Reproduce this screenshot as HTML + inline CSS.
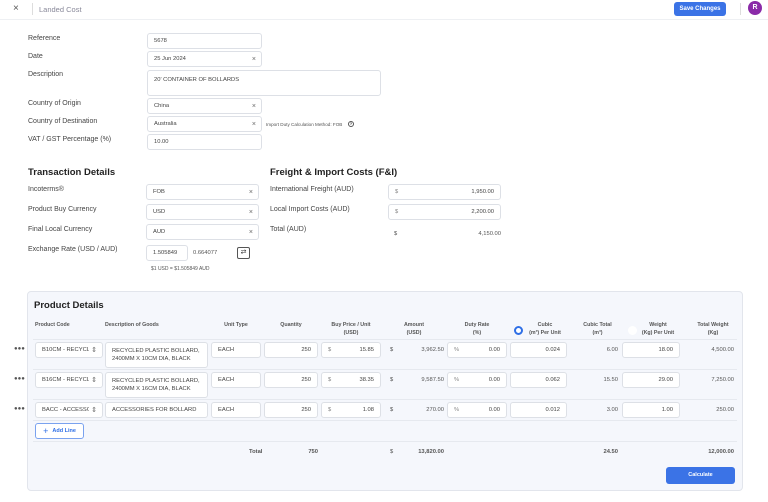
<!DOCTYPE html>
<html><head><meta charset="utf-8"><style>
*{box-sizing:border-box;margin:0;padding:0}
body{width:768px;height:502px;background:#fff;font-family:"Liberation Sans",sans-serif;color:#333;position:relative;overflow:hidden}
.a{position:absolute}
.lbl{position:absolute;left:28px;font-size:7px;color:#444}
.in{position:absolute;background:#fff;border:1px solid #dde0e6;border-radius:3px;font-size:5.8px;color:#444;padding-left:6px;display:flex;align-items:center;white-space:nowrap;overflow:hidden}
.in .x{position:absolute;right:5px;font-size:7px;color:#666;background:#fff;padding-left:2px}
.r{justify-content:flex-end;padding-right:6px}
.pre{position:absolute;left:6px;color:#888}
.h{position:absolute;font-size:5.3px;font-weight:bold;color:#555;text-align:center;line-height:8px}
.t{position:absolute;font-size:5.8px;color:#555}
.dots{position:absolute;left:14px;font-size:6px;color:#555;letter-spacing:0px}
.line{position:absolute;left:33px;width:704px;height:1px;background:#e6e9ef}
</style></head><body>
<div class="a" style="left:0;top:19px;width:768px;height:1px;background:#eef0f3"></div>
<div class="a" style="left:13px;top:3px;font-size:10px;color:#555">×</div>
<div class="a" style="left:32px;top:3px;width:1px;height:12px;background:#ddd"></div>
<div class="a" style="left:39px;top:5px;font-size:7.5px;color:#889">Landed Cost</div>
<div class="a" style="left:674px;top:2px;width:52px;height:14px;background:#3b73e6;border-radius:3px;color:#fff;font-size:6px;font-weight:bold;line-height:14px;text-align:center">Save Changes</div>
<div class="a" style="left:740px;top:3px;width:1px;height:12px;background:#ddd"></div>
<div class="a" style="left:748px;top:1px;width:14px;height:14px;border-radius:50%;background:#8a2aa8;color:#fff;font-size:7px;font-weight:bold;line-height:14px;text-align:center">R</div>

<div class="lbl" style="top:35px">Reference</div>
<div class="in" style="left:147px;top:33px;width:115px;height:16px">5678</div>
<div class="lbl" style="top:53px">Date</div>
<div class="in" style="left:147px;top:51px;width:115px;height:16px">25 Jun 2024<span class="x">×</span></div>
<div class="lbl" style="top:71px">Description</div>
<div class="in" style="left:147px;top:70px;width:234px;height:26px;align-items:flex-start;padding-top:6px">20' CONTAINER OF BOLLARDS</div>
<div class="lbl" style="top:100px">Country of Origin</div>
<div class="in" style="left:147px;top:98px;width:115px;height:16px">China<span class="x">×</span></div>
<div class="lbl" style="top:118px">Country of Destination</div>
<div class="in" style="left:147px;top:116px;width:115px;height:16px">Australia<span class="x">×</span></div>
<div class="a" style="left:266px;top:122px;font-size:4.6px;color:#555">Import Duty Calculation Method: FOB</div>
<div class="a" style="left:348px;top:121px;width:6px;height:6px;border-radius:50%;border:1.2px solid #555;font-size:4px;text-align:center;line-height:4px;font-weight:bold">?</div>
<div class="lbl" style="top:136px">VAT / GST Percentage (%)</div>
<div class="in" style="left:147px;top:134px;width:115px;height:16px">10.00</div>

<div class="a" style="left:28px;top:167px;font-size:9.5px;font-weight:bold;color:#222">Transaction Details</div>
<div class="a" style="left:270px;top:167px;font-size:9.5px;font-weight:bold;color:#222">Freight &amp; Import Costs (F&amp;I)</div>
<div class="lbl" style="top:186px">Incoterms®</div>
<div class="in" style="left:146px;top:184px;width:113px;height:16px">FOB<span class="x">×</span></div>
<div class="lbl" style="top:206px">Product Buy Currency</div>
<div class="in" style="left:146px;top:204px;width:113px;height:16px">USD<span class="x">×</span></div>
<div class="lbl" style="top:226px">Final Local Currency</div>
<div class="in" style="left:146px;top:224px;width:113px;height:16px">AUD<span class="x">×</span></div>
<div class="lbl" style="top:246px">Exchange Rate (USD / AUD)</div>
<div class="in" style="left:146px;top:245px;width:42px;height:16px">1.505849</div>
<div class="t" style="left:193px;top:250px">0.664077</div>
<div class="a" style="left:237px;top:247px;width:13px;height:12px;border:1px solid #555;border-radius:2px;font-size:7px;text-align:center;line-height:10px">⇄</div>
<div class="t" style="left:151px;top:266px;font-size:5px">$1 USD = $1.505849 AUD</div>

<div class="a" style="left:270px;top:186px;font-size:7px;color:#444">International Freight (AUD)</div>
<div class="in r" style="left:388px;top:184px;width:113px;height:16px"><span class="pre">$</span>1,950.00</div>
<div class="a" style="left:270px;top:206px;font-size:7px;color:#444">Local Import Costs (AUD)</div>
<div class="in r" style="left:388px;top:204px;width:113px;height:16px"><span class="pre">$</span>2,200.00</div>
<div class="a" style="left:270px;top:226px;font-size:7px;color:#444">Total (AUD)</div>
<div class="t" style="left:394px;top:231px">$</div>
<div class="t" style="left:440px;top:231px;width:61px;text-align:right">4,150.00</div>

<div class="a" style="left:27px;top:291px;width:716px;height:200px;background:#f5f7fc;border:1px solid #e2e5ec;border-radius:4px"></div>
<div class="a" style="left:34px;top:300px;font-size:9.5px;font-weight:bold;color:#222">Product Details</div>
<div class="h" style="left:35px;top:321px;text-align:left">Product Code</div>
<div class="h" style="left:105px;top:321px;text-align:left">Description of Goods</div>
<div class="h" style="left:211px;top:321px;width:50px">Unit Type</div>
<div class="h" style="left:264px;top:321px;width:54px">Quantity</div>
<div class="h" style="left:321px;top:321px;width:60px">Buy Price / Unit<br>(USD)</div>
<div class="h" style="left:390px;top:321px;width:48px">Amount<br>(USD)</div>
<div class="h" style="left:447px;top:321px;width:60px">Duty Rate<br>(%)</div>
<div class="a" style="left:514px;top:326px;width:9px;height:9px;border-radius:50%;border:2.5px solid #2f6fe6;background:#fff"></div>
<div class="h" style="left:525px;top:321px;width:40px">Cubic<br>(m³) Per Unit</div>
<div class="h" style="left:575px;top:321px;width:45px">Cubic Total<br>(m³)</div>
<div class="a" style="left:628px;top:326px;width:9px;height:9px;border-radius:50%;background:#fff"></div>
<div class="h" style="left:637px;top:321px;width:42px">Weight<br>(Kg) Per Unit</div>
<div class="h" style="left:690px;top:321px;width:46px">Total Weight<br>(Kg)</div>
<div class="line" style="top:339px"></div>

<div class="dots" style="top:346px">●●●</div>
<div class="in" style="left:35px;top:342px;width:68px;height:16px">B10CM - RECYCLEI<span class="x">⇕</span></div>
<div class="in" style="left:105px;top:342px;width:103px;height:26px;line-height:8px">RECYCLED PLASTIC BOLLARD,<br>2400MM X 10CM DIA, BLACK</div>
<div class="in" style="left:211px;top:342px;width:50px;height:16px">EACH</div>
<div class="in r" style="left:264px;top:342px;width:54px;height:16px">250</div>
<div class="in r" style="left:321px;top:342px;width:60px;height:16px"><span class="pre">$</span>15.85</div>
<div class="t" style="left:390px;top:347px">$</div><div class="t" style="left:400px;top:347px;width:44px;text-align:right">3,962.50</div>
<div class="in r" style="left:447px;top:342px;width:60px;height:16px"><span class="pre">%</span>0.00</div>
<div class="in r" style="left:510px;top:342px;width:57px;height:16px">0.024</div>
<div class="t" style="left:575px;top:347px;width:43px;text-align:right">6.00</div>
<div class="in r" style="left:622px;top:342px;width:58px;height:16px">18.00</div>
<div class="t" style="left:690px;top:347px;width:44px;text-align:right">4,500.00</div>
<div class="line" style="top:369px"></div>

<div class="dots" style="top:376px">●●●</div>
<div class="in" style="left:35px;top:372px;width:68px;height:16px">B16CM - RECYCLEI<span class="x">⇕</span></div>
<div class="in" style="left:105px;top:372px;width:103px;height:26px;line-height:8px">RECYCLED PLASTIC BOLLARD,<br>2400MM X 16CM DIA, BLACK</div>
<div class="in" style="left:211px;top:372px;width:50px;height:16px">EACH</div>
<div class="in r" style="left:264px;top:372px;width:54px;height:16px">250</div>
<div class="in r" style="left:321px;top:372px;width:60px;height:16px"><span class="pre">$</span>38.35</div>
<div class="t" style="left:390px;top:377px">$</div><div class="t" style="left:400px;top:377px;width:44px;text-align:right">9,587.50</div>
<div class="in r" style="left:447px;top:372px;width:60px;height:16px"><span class="pre">%</span>0.00</div>
<div class="in r" style="left:510px;top:372px;width:57px;height:16px">0.062</div>
<div class="t" style="left:575px;top:377px;width:43px;text-align:right">15.50</div>
<div class="in r" style="left:622px;top:372px;width:58px;height:16px">29.00</div>
<div class="t" style="left:690px;top:377px;width:44px;text-align:right">7,250.00</div>
<div class="line" style="top:399px"></div>

<div class="dots" style="top:406px">●●●</div>
<div class="in" style="left:35px;top:402px;width:68px;height:16px">BACC - ACCESSOR<span class="x">⇕</span></div>
<div class="in" style="left:105px;top:402px;width:103px;height:16px">ACCESSORIES FOR BOLLARD</div>
<div class="in" style="left:211px;top:402px;width:50px;height:16px">EACH</div>
<div class="in r" style="left:264px;top:402px;width:54px;height:16px">250</div>
<div class="in r" style="left:321px;top:402px;width:60px;height:16px"><span class="pre">$</span>1.08</div>
<div class="t" style="left:390px;top:407px">$</div><div class="t" style="left:400px;top:407px;width:44px;text-align:right">270.00</div>
<div class="in r" style="left:447px;top:402px;width:60px;height:16px"><span class="pre">%</span>0.00</div>
<div class="in r" style="left:510px;top:402px;width:57px;height:16px">0.012</div>
<div class="t" style="left:575px;top:407px;width:43px;text-align:right">3.00</div>
<div class="in r" style="left:622px;top:402px;width:58px;height:16px">1.00</div>
<div class="t" style="left:690px;top:407px;width:44px;text-align:right">250.00</div>
<div class="line" style="top:420px"></div>

<div class="a" style="left:35px;top:423px;width:49px;height:16px;border:1px solid #7aa2ef;border-radius:3px;background:#fff;color:#2f6fe6;font-size:5.5px;font-weight:bold;display:flex;align-items:center;justify-content:center"><span style="font-size:9px;margin-right:4px;font-weight:normal">+</span>Add Line</div>
<div class="line" style="top:441px"></div>
<div class="t" style="left:249px;top:449px;font-weight:bold">Total</div>
<div class="t" style="left:264px;top:449px;width:54px;text-align:right;font-weight:bold">750</div>
<div class="t" style="left:390px;top:449px">$</div>
<div class="t" style="left:400px;top:449px;width:44px;text-align:right;font-weight:bold">13,820.00</div>
<div class="t" style="left:575px;top:449px;width:43px;text-align:right;font-weight:bold">24.50</div>
<div class="t" style="left:690px;top:449px;width:44px;text-align:right;font-weight:bold">12,000.00</div>
<div class="a" style="left:666px;top:467px;width:69px;height:17px;background:#3b73e6;border-radius:3px;color:#fff;font-size:5.5px;font-weight:bold;line-height:17px;text-align:center">Calculate</div>
</body></html>
